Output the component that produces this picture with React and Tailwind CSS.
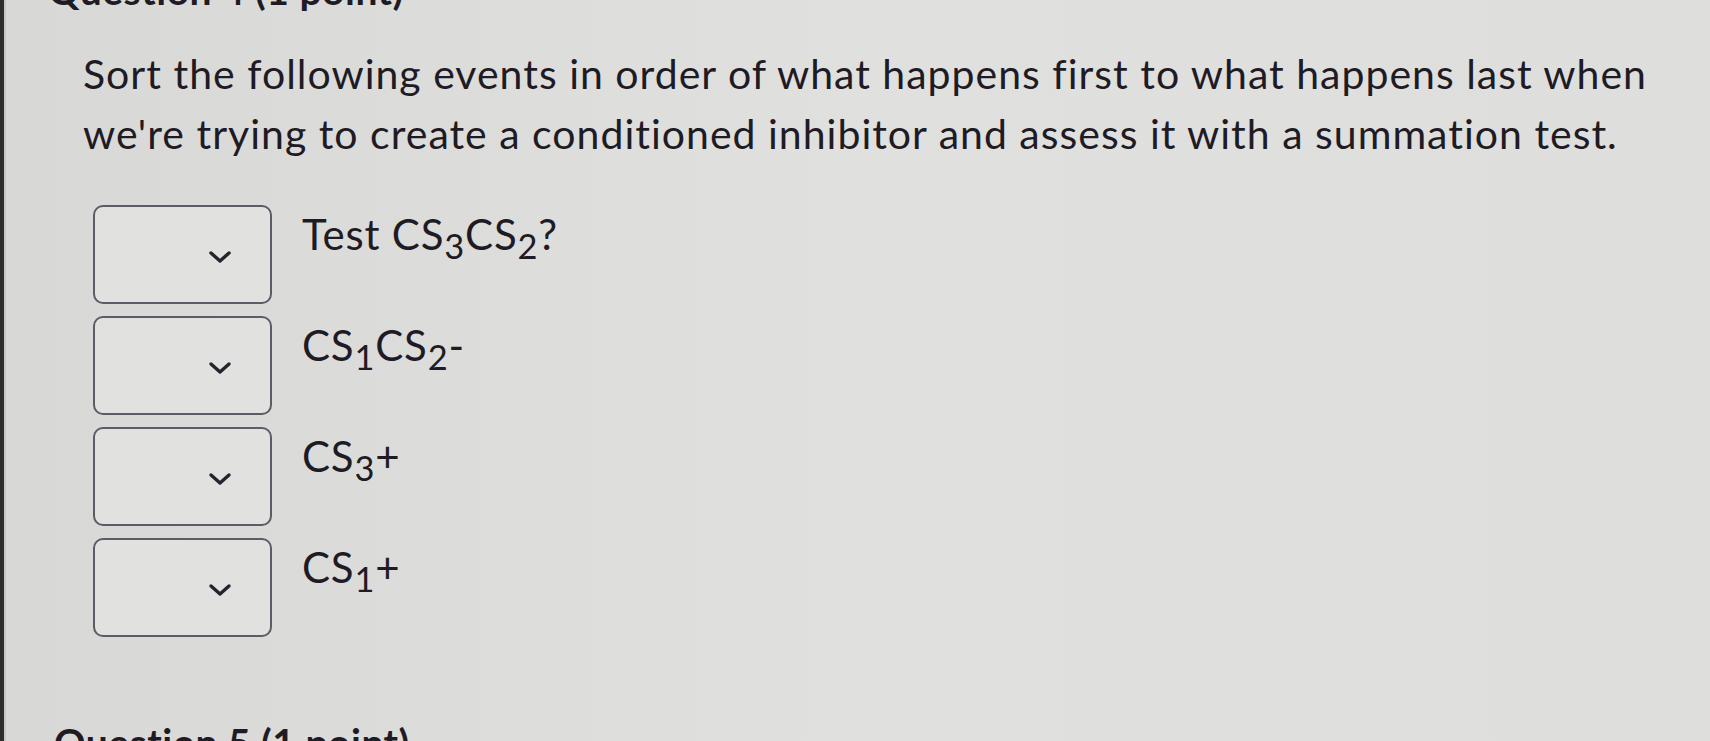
import React from 'react';

const rows = [
  { id: 1, label: <>Test CS<sub>3</sub>CS<sub>2</sub>?</> },
  { id: 2, label: <>CS<sub>1</sub>CS<sub>2</sub>-</> },
  { id: 3, label: <>CS<sub>3</sub>+</> },
  { id: 4, label: <>CS<sub>1</sub>+</> },
];

function Chevron() {
  return (
    <svg width="24" height="14" viewBox="0 0 24 14" fill="none">
      <polyline
        points="3,3 12,11 21,3"
        stroke="#27232c"
        strokeWidth="3.4"
        strokeLinecap="round"
        strokeLinejoin="round"
      />
    </svg>
  );
}

function OrderSelect() {
  return (
    <div className="w-[179px] h-[99px] shrink-0 rounded-[10px] border-2 border-[#5f5b64] bg-[#e1e1e0] flex items-center justify-end pr-[38px] pt-[4px]">
      <Chevron />
    </div>
  );
}

export default function App() {
  return (
    <div
      className="h-[741px] w-full overflow-hidden flex bg-gradient-to-r from-[#d8d8d7] via-[#e0e0df] to-[#dededd] text-[#1f1b24]"
      style={{ fontFamily: 'Lato, "Open Sans", sans-serif' }}
    >
      {/* monitor bezel on the left */}
      <div className="w-[4px] shrink-0 bg-[#2e2d30]" />
      <div className="w-[2px] shrink-0 bg-[#cbc6bf]" />

      <div className="flex-1 flex flex-col">
        <h2 className="ml-[42px] -mt-[29px] text-[39px] leading-none font-bold tracking-[0.5px]">Question 4 (1 point)</h2>

        <div className="pl-[77px]">
          <p className="mt-[34px] w-[1610px] text-[41px] leading-[60px] tracking-[1px]">
            Sort the following events in order of what happens first to what happens last when we're trying to create a conditioned inhibitor and assess it with a summation test.
          </p>

          <div className="mt-[41px] pl-[10px] flex flex-col gap-[12px]">
            {rows.map((row) => (
              <div key={row.id} className="flex items-start gap-[30px]">
                <OrderSelect />
                <div className="mt-[4px] text-[42px] leading-[50px] tracking-[0.8px] [&_sub]:text-[82%]">{row.label}</div>
              </div>
            ))}
          </div>
        </div>

        <h2 className="ml-[48px] mt-[86px] text-[39px] leading-none font-bold tracking-[0.5px]">Question 5 (1 point)</h2>
      </div>
    </div>
  );
}
